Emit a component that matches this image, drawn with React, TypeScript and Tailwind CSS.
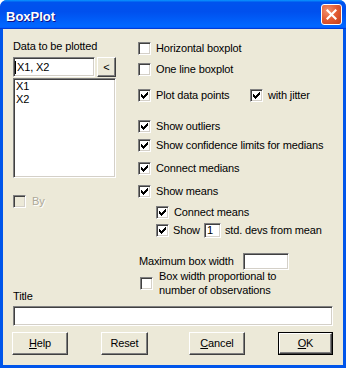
import React from "react"

const font = "font-['Liberation_Sans',Arial,sans-serif] text-[11px] leading-[13px] tracking-[-0.15px] text-black"

const checkRuns: [number, number, number][] = [
  [6, 0, 1],
  [5, 1, 2],
  [0, 2, 1],
  [4, 2, 3],
  [0, 3, 2],
  [3, 3, 3],
  [0, 4, 5],
  [1, 5, 3],
  [2, 6, 1],
]

const Check = () => (
  <svg width="7" height="7" viewBox="0 0 7 7" shapeRendering="crispEdges" className="absolute left-[2px] top-[2px]">
    {checkRuns.map(([x, y, w], i) => (
      <rect key={i} x={x} y={y} width={w} height={1} fill="#000" />
    ))}
  </svg>
)

const Box = ({ checked, disabled }: { checked?: boolean; disabled?: boolean }) => (
  <span
    className={`relative block w-[13px] h-[13px] shrink-0 border border-t-[#808080] border-l-[#808080] border-r-white border-b-white shadow-[inset_1px_1px_0_#404040,inset_-1px_-1px_0_#D4D0C8] ${
      disabled ? "bg-[#ECE9D8]" : "bg-white"
    }`}
  >
    {checked && <Check />}
  </span>
)

const Row = ({ label, checked, className = "" }: { label: string; checked?: boolean; className?: string }) => (
  <div className={`flex items-center h-[13px] gap-[5px] ${className}`}>
    <Box checked={checked} />
    <span className="whitespace-nowrap">{label}</span>
  </div>
)

const sunken =
  "border border-t-[#808080] border-l-[#808080] border-r-white border-b-white shadow-[inset_1px_1px_0_#404040,inset_-1px_-1px_0_#D4D0C8] bg-white"

const raised =
  "flex items-center justify-center bg-[#ECE9D8] border border-t-white border-l-white border-r-[#404040] border-b-[#404040] shadow-[inset_-1px_-1px_0_#808080]"

const Btn = ({ children, className = "" }: { children: React.ReactNode; className?: string }) => (
  <div className={`${raised} h-[23px] ${className}`}>{children}</div>
)

export default function App() {
  return (
    <div className={`w-[346px] h-[368px] flex flex-col rounded-t-[7px] bg-[#0055EA] overflow-hidden ${font}`}>
      {/* title bar */}
      <div className="h-[29px] shrink-0 flex items-center pt-[3px] pl-[6px] pr-[4px] bg-[linear-gradient(180deg,#0997ff,#0053ee_8%,#0050ee_40%,#06f_88%,#06f_93%,#005bff_95%,#003dd7_96%,#003dd7)]">
        <span className="font-bold text-[13px] tracking-normal text-white [text-shadow:1px_1px_#0f1089]">BoxPlot</span>
        <div className="ml-auto mb-[3px] w-[21px] h-[21px] rounded-[3px] border border-white bg-[radial-gradient(circle_at_30%_30%,#f2916f,#e25a32_50%,#c13d1b)] flex items-center justify-center">
          <svg width="11" height="11" viewBox="0 0 11 11">
            <path d="M1.5 1.5 L9.5 9.5 M9.5 1.5 L1.5 9.5" stroke="#fff" strokeWidth="2.2" strokeLinecap="square" />
          </svg>
        </div>
      </div>

      {/* client area */}
      <div className="mx-[3px] mb-[3px] h-[336px] bg-[#ECE9D8] flex flex-col">
        <div className="flex h-[277px]">
          {/* left column */}
          <div className="ml-[10px] w-[103px] flex flex-col">
            <div className="mt-[11px] h-[13px]">Data to be plotted</div>
            <div className="mt-[4px] flex h-[20px]">
              <div className={`${sunken} w-[82px] h-[20px] flex items-center pl-[1px]`}>
                <span className="w-px h-[13px] bg-black mr-[1px]" />
                <span>X1, X2</span>
              </div>
              <Btn className="ml-[2px] w-[19px] !h-[20px]">&lt;</Btn>
            </div>
            <div className={`${sunken} mt-[1px] h-[100px] pt-[1px] pl-[2px]`}>
              <div>X1</div>
              <div>X2</div>
            </div>
            <div className="mt-[17px] flex items-center gap-[6px]">
              <Box disabled />
              <span className="text-[#ACA899] [text-shadow:1px_1px_#fff]">By</span>
            </div>
            <div className="mt-auto mb-[3px] h-[13px]">Title</div>
          </div>

          {/* right column */}
          <div className="ml-[22px] flex flex-col">
            <Row className="mt-[13px]" label="Horizontal boxplot" />
            <Row className="mt-[8px]" label="One line boxplot" />
            <div className="mt-[13px] flex items-center h-[13px]">
              <Box checked />
              <span className="ml-[5px] w-[94px] whitespace-nowrap">Plot data points</span>
              <Box checked />
              <span className="ml-[5px]">with jitter</span>
            </div>
            <Row className="mt-[18px]" label="Show outliers" checked />
            <Row className="mt-[6px]" label="Show confidence limits for medians" checked />
            <Row className="mt-[10px]" label="Connect medians" checked />
            <Row className="mt-[10px]" label="Show means" checked />
            <Row className="mt-[8px] ml-[18px]" label="Connect means" checked />
            <div className="mt-[4px] ml-[18px] flex items-center h-[15px]">
              <Box checked />
              <span className="ml-[4px]">Show</span>
              <div className={`${sunken} ml-[4px] w-[17px] h-[15px] flex items-center pl-[2px]`}>1</div>
              <span className="ml-[4px] whitespace-nowrap">std. devs from mean</span>
            </div>
            <div className="mt-[15px] flex items-center h-[17px]">
              <span className="ml-[1px] w-[104px]">Maximum box width</span>
              <div className={`${sunken} w-[46px] h-[17px]`} />
            </div>
            <div className="mt-[-1px] ml-[2px] flex items-center gap-[6px]">
              <Box />
              <div className="leading-[14px]">
                <div>Box width proportional to</div>
                <div>number of observations</div>
              </div>
            </div>
          </div>
        </div>

        <div className={`${sunken} ml-[10px] w-[320px] h-[20px]`} />

        <div className="mt-[6px] flex">
          <Btn className="ml-[9px] w-[56px]">
            <span><span className="underline">H</span>elp</span>
          </Btn>
          <Btn className="ml-[33px] w-[47px]">Reset</Btn>
          <Btn className="ml-[41px] w-[56px]">
            <span><span className="underline">C</span>ancel</span>
          </Btn>
          <div className="ml-[33px] w-[55px] h-[23px] border border-black flex">
            <div className={`${raised} flex-1`}>
              <span><span className="underline">O</span>K</span>
            </div>
          </div>
        </div>
      </div>
    </div>
  )
}
